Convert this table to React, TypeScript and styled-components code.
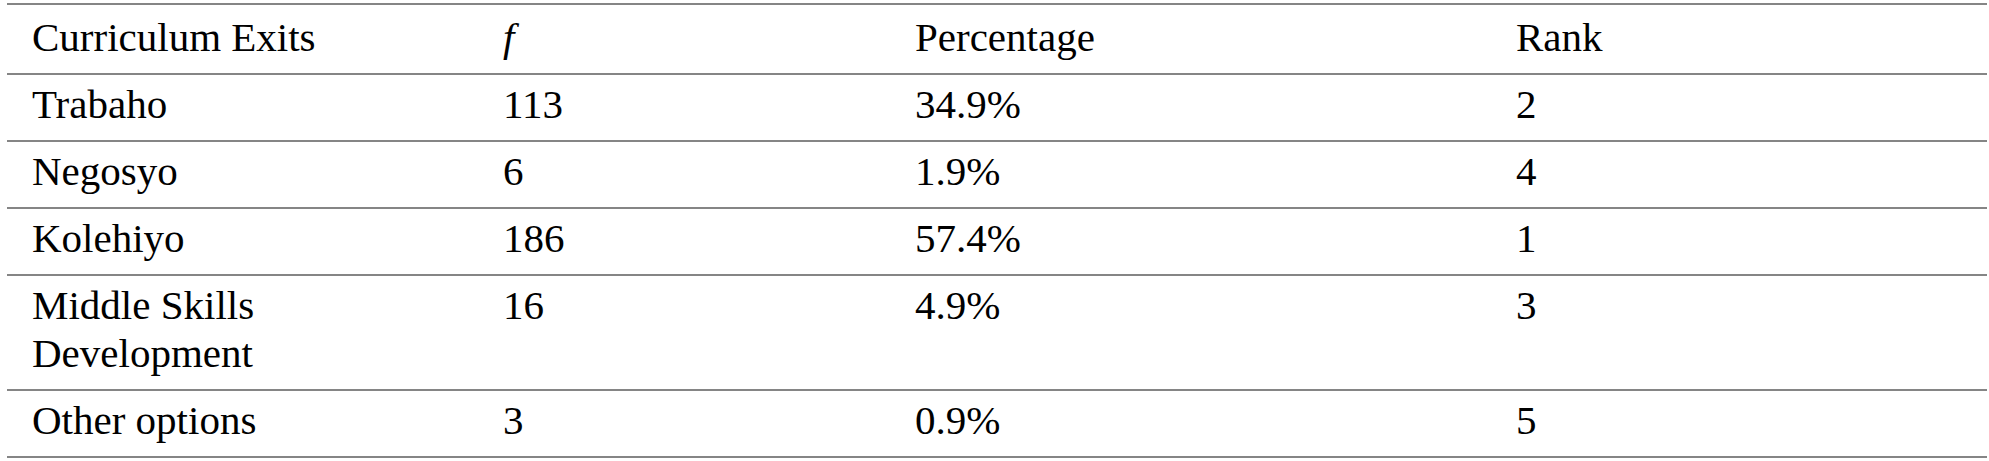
import styled, { createGlobalStyle } from "styled-components";

interface Row {
  exit: string;
  f: number;
  percentage: string;
  rank: number;
}

const rows: Row[] = [
  { exit: "Trabaho", f: 113, percentage: "34.9%", rank: 2 },
  { exit: "Negosyo", f: 6, percentage: "1.9%", rank: 4 },
  { exit: "Kolehiyo", f: 186, percentage: "57.4%", rank: 1 },
  { exit: "Middle Skills Development", f: 16, percentage: "4.9%", rank: 3 },
  { exit: "Other options", f: 3, percentage: "0.9%", rank: 5 },
];

export default function App() {
  return (
    <>
      <GlobalStyle />
      <Page>
        <Table>
          <HeaderRow>
            <HeadCell>Curriculum Exits</HeadCell>
            <HeadCell>
              <Italic>f</Italic>
            </HeadCell>
            <HeadCell>Percentage</HeadCell>
            <HeadCell>Rank</HeadCell>
          </HeaderRow>
          {rows.map((row) => (
            <BodyRow key={row.exit}>
              <Cell>
                <Wrap>{row.exit}</Wrap>
              </Cell>
              <Cell>{row.f}</Cell>
              <Cell>{row.percentage}</Cell>
              <Cell>{row.rank}</Cell>
            </BodyRow>
          ))}
        </Table>
      </Page>
    </>
  );
}

const GlobalStyle = createGlobalStyle`
  body {
    margin: 0;
    background: #ffffff;
  }
`;

const Page = styled.div`
  padding: 3px 0 0 7px;
`;

const Table = styled.div`
  width: 1980px;
  display: flex;
  flex-direction: column;
  border-top: 2px solid #858585;
  color: #000;
`;

const BodyRow = styled.div`
  display: grid;
  grid-template-columns: 471px 412px 601px 496px;
  border-bottom: 2px solid #858585;
`;

const HeaderRow = styled(BodyRow)``;

const Cell = styled.div`
  padding: 5px 0 12px 25px;
  font-family: "Liberation Serif", serif;
  font-size: 41px;
  line-height: 48px;
`;

const HeadCell = styled(Cell)`
  padding-top: 8px;
`;

const Italic = styled.span`
  font-style: italic;
`;

const Wrap = styled.div`
  max-width: 300px;
`;
